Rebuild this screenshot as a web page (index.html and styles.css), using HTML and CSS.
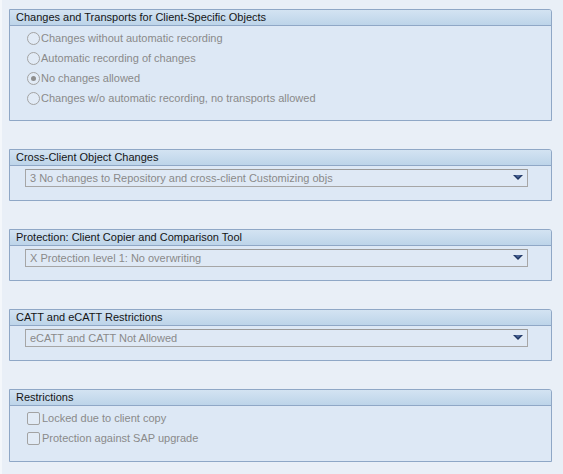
FILE: index.html
```html
<!DOCTYPE html>
<html>
<head>
  <meta charset="utf-8">
  <link rel="stylesheet" href="styles.css">
</head>
<body>
  <div class="page">

    <div class="group">
      <div class="group-title">Changes and Transports for Client-Specific Objects</div>
      <div class="group-body rows">
        <label class="opt"><span class="radio"></span>Changes without automatic recording</label>
        <label class="opt"><span class="radio"></span>Automatic recording of changes</label>
        <label class="opt"><span class="radio checked"></span>No changes allowed</label>
        <label class="opt"><span class="radio"></span>Changes w/o automatic recording, no transports allowed</label>
      </div>
    </div>

    <div class="group">
      <div class="group-title">Cross-Client Object Changes</div>
      <div class="group-body combo-body">
        <div class="combo">
          <span class="combo-text">3 No changes to Repository and cross-client Customizing objs</span>
          <svg class="combo-arrow" width="10" height="6" viewBox="0 0 10 6"><path d="M0 0h10L5 5z" fill="#1d3563"/><path d="M2 0h6L5 3z" fill="#4a6496"/></svg>
        </div>
      </div>
    </div>

    <div class="group">
      <div class="group-title">Protection: Client Copier and Comparison Tool</div>
      <div class="group-body combo-body">
        <div class="combo">
          <span class="combo-text">X Protection level 1: No overwriting</span>
          <svg class="combo-arrow" width="10" height="6" viewBox="0 0 10 6"><path d="M0 0h10L5 5z" fill="#1d3563"/><path d="M2 0h6L5 3z" fill="#4a6496"/></svg>
        </div>
      </div>
    </div>

    <div class="group">
      <div class="group-title">CATT and eCATT Restrictions</div>
      <div class="group-body combo-body">
        <div class="combo">
          <span class="combo-text">eCATT and CATT Not Allowed</span>
          <svg class="combo-arrow" width="10" height="6" viewBox="0 0 10 6"><path d="M0 0h10L5 5z" fill="#1d3563"/><path d="M2 0h6L5 3z" fill="#4a6496"/></svg>
        </div>
      </div>
    </div>

    <div class="group">
      <div class="group-title">Restrictions</div>
      <div class="group-body rows last">
        <label class="opt"><span class="check"></span>Locked due to client copy</label>
        <label class="opt"><span class="check"></span>Protection against SAP upgrade</label>
      </div>
    </div>

  </div>
</body>
</html>
```

FILE: styles.css
```css
html,
body {
  margin: 0;
  height: 100%;
}

body {
  background: #e9eff7;
  font-family: "Liberation Sans", Arial, sans-serif;
  font-size: 11px;
  color: #1a1a1a;
  border-left: 2px solid #f4f7fb;
  box-sizing: border-box;
}

.page {
  display: flex;
  flex-direction: column;
  gap: 28px;
  padding: 9px 0 0 7px;
  width: 543px;
}

/* SAP style group box */
.group {
  border: 1px solid #8fa7c6;
  border-radius: 0 3px 0 0;
  background: #dde8f5;
}

.group-title {
  height: 15px;
  line-height: 15px;
  padding-left: 6px;
  border-bottom: 1px solid #8fa7c6;
  border-radius: 0 2px 0 0;
  background: linear-gradient(#d3e3f2, #bdd4e9);
  font-size: 11px;
  color: #151515;
}

.rows {
  padding: 2px 0 12px 17px;
}

.rows.last {
  padding-bottom: 13px;
}

.opt {
  display: flex;
  align-items: center;
  height: 20px;
  color: #8a8a8a;
  font-size: 11px;
}

.radio {
  width: 11px;
  height: 11px;
  margin-right: 1px;
  border: 1px solid #a3a3a3;
  border-radius: 50%;
  background: #e2ebf6;
  display: flex;
  align-items: center;
  justify-content: center;
}

.radio.checked:after {
  content: "";
  width: 5px;
  height: 5px;
  border-radius: 50%;
  background: #8e8e8e;
}

.check {
  width: 11px;
  height: 11px;
  margin-right: 2px;
  border: 1px solid #a3a3a3;
  border-radius: 2px;
  background: #e2ebf6;
}

.combo-body {
  padding: 3px 23px 13px 15px;
}

.combo {
  display: flex;
  align-items: center;
  height: 16px;
  border: 1px solid #a6a6a6;
  border-top-color: #9a9a9a;
  background: #dfe9f5;
  padding: 0 4px 0 4px;
}

.combo-text {
  flex: 1;
  color: #8a8a8a;
  font-size: 11px;
}
```
